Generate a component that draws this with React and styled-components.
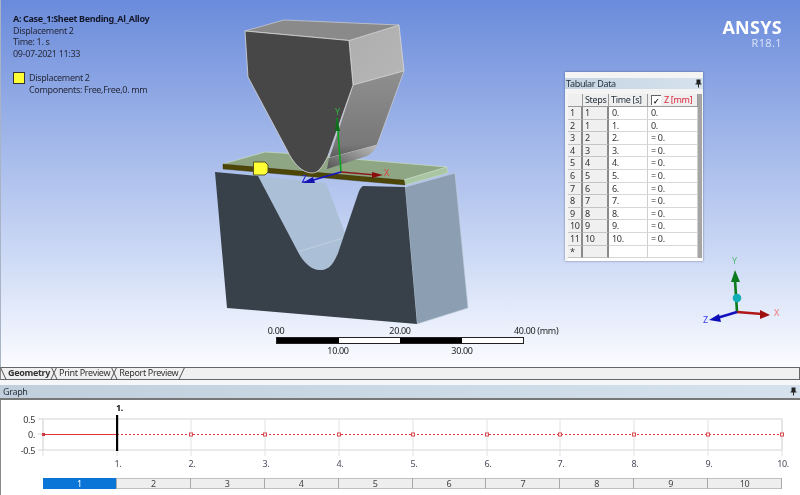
import React from "react";
import styled, { createGlobalStyle } from "styled-components";

const Global = createGlobalStyle`
  html, body { margin: 0; padding: 0; background: #fff; }
  body { width: 800px; height: 495px; overflow: hidden; font-family: "Noto Sans", "Open Sans", sans-serif; }
  #root { width: 800px; height: 495px; }
`;

const Page = styled.div`
  width: 800px; height: 495px; display: flex; flex-direction: column;
  color: #2b2f38; font-size: 9px; letter-spacing: -.33px; filter: blur(0.35px); overflow: hidden;
`;
const Viewport = styled.div`
  position: relative; height: 367px; flex: none; border-left: 1px solid #a9b3c6;
  background: linear-gradient(180deg, #6a8bdb 0%, #a4b9ea 40%, #d0dcf6 72%, #fbfcff 100%);
`;
const Annotation = styled.div`
  position: relative; width: 200px; padding: 13px 0 0 12px; display: flex; flex-direction: column; line-height: 11.7px; color: #262a3c;
`;
const Title = styled.div` font-weight: 700; color: #14182a; `;
const Legend = styled.div` display: flex; gap: 4px; margin-top: 12px; `;
const Swatch = styled.div` width: 12px; height: 12px; background: #ffff33; border: 1px solid #333; box-sizing: border-box; `;
const Logo = styled.div`
  position: absolute; top: 18px; right: 18px; display: flex; flex-direction: column; align-items: flex-end; gap: 1px; color: #fff;
`;
const LogoName = styled.div` font: 700 18px/18px "Open Sans", sans-serif; letter-spacing: .3px; `;
const LogoVer = styled.div` font: 400 11px/11px "Open Sans", sans-serif; color: #dde6f8; letter-spacing: .4px; `;
const Scene = styled.svg` position: absolute; left: -1px; top: 0; `;

const ScaleBar = styled.div`
  position: absolute; left: 275px; top: 325px; width: 248px; color: #222;
`;
const ScaleLabels = styled.div`
  display: flex; justify-content: space-between; height: 11px; line-height: 11px; padding: 0 ${p => p.$inset || 0}px; margin-top: ${p => p.$top || 0}px;
`;
const ScaleTick = styled.span`
  width: 0; display: flex; justify-content: center; white-space: nowrap;
`;
const ScaleTickEnd = styled.span`
  width: 0; white-space: nowrap; transform: translateX(-10px);
`;
const Bar = styled.div` display: flex; height: 7px; border: 1px solid #222; box-sizing: border-box; margin-top: 1px; `;
const BarPart = styled.div` flex: 1; background: ${p => (p.$dark ? "#000" : "#fff")}; `;

const Panel = styled.div`
  position: absolute; left: 564px; top: 72px; width: 138px; height: 189px; background: #f4f4f4;
  box-shadow: 0 0 2px rgba(50, 60, 90, .6); display: flex; flex-direction: column;
`;
const PanelHead = styled.div`
  margin-top: 6px; height: 11px; line-height: 11px; flex: none; display: flex; justify-content: space-between; align-items: center;
  background: linear-gradient(90deg, #c5d3e0, #d6e3ef); color: #23303c; padding: 0 1px;
`;
const PinBox = styled.svg` flex: none; `;
const Table = styled.div`
  margin: 5px 1px 0 3px; flex: 1; display: grid; grid-template-columns: 15px 26px 39px 50px 4px;
  grid-template-rows: 13px repeat(12, 12.6px); background: #fff;
`;
const Head = styled.div`
  background: #efefef; border-right: 1px solid #999; border-bottom: 1px solid #999; box-sizing: border-box;
  padding-left: 2px; line-height: 12px; color: #26303a; display: flex; align-items: center;
`;
const ZHead = styled(Head)` color: #d8283a; gap: 3px; padding-left: 3px; `;
const Check = styled.span`
  width: 10px; height: 10px; background: #fff; border-left: 1px solid #666; border-top: 1px solid #666; box-sizing: border-box; font-size: 8px; line-height: 9px; color: #111; text-align: center; font-weight: 700;
`;
const RowHead = styled.div`
  background: #f0f0f0; border-right: 2px solid #8a8a8a; border-bottom: 1px solid #c4c4c4; box-sizing: border-box; padding-left: 2px; line-height: 11px; color: #333;
`;
const Cell = styled.div`
  background: #fff; border-right: 1px solid #cfcfcf; border-bottom: 1px solid #d8d8d8; box-sizing: border-box; padding-left: 3px; line-height: 11px; color: #333;
`;
const Gutter = styled.div` grid-column: 5; grid-row: 1 / span 13; background: #a5a5a5; `;

const TabBar = styled.div`
  flex: none; height: 13px; box-sizing: border-box; border: 1px solid #666; border-left: 1px solid #888; background: #f0f0f0; display: flex; gap: 9px; padding-left: 7px;
`;
const Tab = styled.div`
  height: 11px; line-height: 10px; position: relative; color: #333; font-weight: ${p => (p.$active ? 700 : 400)};
  &::before {
    content: ""; position: absolute; left: -5px; top: 0; width: 1px; height: 12px; background: #555; transform: skewX(25deg);
  }
  &::after {
    content: ""; position: absolute; right: -4px; top: 0; width: 1px; height: 12px; background: #555; transform: skewX(-25deg);
  }
`;
const Gap = styled.div` flex: none; height: 5px; background: #f5f6f8; `;
const GraphHead = styled.div`
  flex: none; height: 15px; box-sizing: border-box; border-bottom: 2px solid #777; background: linear-gradient(90deg, #c1cfdc, #d5e2ee);
  display: flex; justify-content: space-between; align-items: center; padding: 0 3px; color: #28333f; line-height: 13px;
`;
const GraphBody = styled.div`
  flex: 1; background: #fff; position: relative; border-left: 1px solid #8a8a8a;
`;
const Chart = styled.svg` position: absolute; left: -1px; top: 0; `;
const Slider = styled.div`
  position: absolute; left: 42px; top: 78px; width: 739px; height: 11px; display: grid; grid-template-columns: repeat(10, 1fr);
  box-sizing: border-box; background: #eee; box-shadow: inset 0 0 0 1px #c0c0c0;
`;
const Step = styled.div`
  text-align: center; line-height: 11px; color: ${p => (p.$on ? "#fff" : "#444")}; background: ${p => (p.$on ? "#0a75d6" : "transparent")};
  border-right: 1px solid #a8a8a8; box-sizing: border-box;
`;

const Pin = () => (
  <PinBox width="7" height="9" viewBox="0 0 7 9">
    <path d="M1.5 0.5h4v4h1v1h-6v-1h1zM3 5.5h1v3h-1z" fill="#222" />
  </PinBox>
);

const rows = [
  ["1", "1", "0.", "0."], ["2", "1", "1.", "0."], ["3", "2", "2.", "= 0."], ["4", "3", "3.", "= 0."],
  ["5", "4", "4.", "= 0."], ["6", "5", "5.", "= 0."], ["7", "6", "6.", "= 0."], ["8", "7", "7.", "= 0."],
  ["9", "8", "8.", "= 0."], ["10", "9", "9.", "= 0."], ["11", "10", "10.", "= 0."], ["*", "", "", ""],
];
const xs = [43, 117, 191, 265, 339, 413, 487, 560, 634, 708, 782];
const tickLabels = ["1.", "2.", "3.", "4.", "5.", "6.", "7.", "8.", "9.", "10."];

const Model = () => (
  <Scene width="800" height="367" viewBox="0 0 800 367">
    <defs>
      <linearGradient id="lowerFace" x1="0" y1="0" x2="0" y2="1">
        <stop offset="0" stopColor="#8f8f8f" /><stop offset=".85" stopColor="#787878" /><stop offset="1" stopColor="#5a5a5a" />
      </linearGradient>
      <linearGradient id="upperFace" x1="0" y1="0" x2="1" y2="1">
        <stop offset="0" stopColor="#aeaeae" /><stop offset="1" stopColor="#b6b6b6" />
      </linearGradient>
      <linearGradient id="band" x1="0" y1="1" x2="1" y2="0">
        <stop offset="0" stopColor="#555" /><stop offset="1" stopColor="#bdbdbd" />
      </linearGradient>
    </defs>

    {/* lower die */}
    <path d="M405 187 L455 173 L468 308 L417 324 Z" fill="#8b9eb2" stroke="#c4d0dd" strokeWidth=".6" />
    <path d="M258 176 L326 183 L345 233 L338 253 C332 268 326 270 320 270 C311 270 303 262 297 250 Z" fill="#abc0d6" />
    <path d="M297 252 L343 238" stroke="#c6d6e4" strokeWidth=".7" />
    <path d="M215 172 L258 176 L297 250 C303 262 311 270 320 270 C326 270 332 268 338 253 L357 197 C359 191 360 188 363 186 L405 187 L417 324 L227 308 Z" fill="#38414a" />

    {/* sheet */}
    <path d="M223 164 L265 152 L282 153 L447 167 L404 180 Z" fill="#8ea684" stroke="#c8dcc0" strokeWidth=".7" />
    <path d="M404 180 L447 167 L447.5 173 L405 185 Z" fill="#a9c6a2" stroke="#c8dcc0" strokeWidth=".5" />
    <path d="M223 164 L404 180 L405 185 L223 169 Z" fill="#4e4607" stroke="#33300a" strokeWidth=".4" />

    {/* punch */}
    <path d="M349 40.5 L399 25 L404 71 L353 85 Z" fill="url(#upperFace)" stroke="#d8d8d8" strokeWidth=".8" />
    <path d="M353 85 L404 71 L377 145 L329 158 Z" fill="url(#lowerFace)" stroke="#d8d8d8" strokeWidth=".6" />
    <path d="M329 158 L377 145 C375 150 372 153 367 156 L327 169 Z" fill="url(#band)" />
    <path d="M245 31 L284 20 L399 25 L349 40.5 Z" fill="#8a8a8a" stroke="#d0d0d0" strokeWidth=".7" />
    <path d="M245 31 L349 40.5 L353 85 L328 156 C322 168 318 173 312 173 C302 173 293 163 287 150 L248 77 Z" fill="#474747" stroke="#d8d8d8" strokeWidth=".8" />

    {/* central triad */}
    <path d="M341 172 L337 118" stroke="#0aa51e" strokeWidth="1.6" />
    <path d="M337 117 L340 131 L335 131 Z" fill="#0c6e1a" />
    <path d="M341 172 L376 175" stroke="#8c1a1a" strokeWidth="1.6" />
    <path d="M383 175 L372 172 L372 178 Z" fill="#8c0c0c" />
    <path d="M341 172 L310 181" stroke="#1414c8" strokeWidth="1.6" />
    <path d="M302 183 L313 177 L315 183 Z" fill="#1414b0" />
    <path d="M302 183 L305 177" stroke="#1414c8" strokeWidth=".8" />
    <text x="335" y="115" fontSize="9" fill="#33b040" fontFamily="Noto Sans">Y</text>
    <text x="384" y="176" fontSize="9" fill="#dd4444" fontFamily="Noto Sans">X</text>
    <text x="302" y="182" fontSize="8" fill="#2a2ae0" fontFamily="Noto Sans">Z</text>

    {/* marker */}
    <path d="M253.5 162 L265 162 L268 165 L268 172 L265 175 L253.5 175 Z" fill="#ffff33" stroke="#4a4a20" strokeWidth=".9" />

    {/* corner triad */}
    <path d="M737 312 L735 280" stroke="#0e7a1e" strokeWidth="2.6" />
    <path d="M735 270 L740 282 L731 282 Z" fill="#0e7a1e" />
    <path d="M737 312 L762 314" stroke="#b01818" strokeWidth="2.6" />
    <path d="M770 315 L760 310 L760 319 Z" fill="#a01010" />
    <path d="M737 312 L717 318" stroke="#1212c0" strokeWidth="2.6" />
    <path d="M709 320 L719 314 L721 322 Z" fill="#0c0cb8" />
    <circle cx="737" cy="298" r="4.3" fill="#12aeb8" />
    <text x="732" y="264" fontSize="9" fill="#55bb77" fontFamily="Noto Sans">Y</text>
    <text x="774" y="316" fontSize="9" fill="#ee7777" fontFamily="Noto Sans">X</text>
    <text x="703" y="323" fontSize="9" fill="#3a3aee" fontFamily="Noto Sans">Z</text>
  </Scene>
);

const GraphChart = () => (
  <Chart width="800" height="95" viewBox="0 400 800 95">
    <rect x="43" y="419" width="739" height="31" fill="none" stroke="#d4d4d4" strokeWidth="1" />
    {xs.map(x => <path key={x} d={`M${x} 419V456`} stroke="#e2e2e2" />)}
    <path d="M38 419h5M38 434h5M38 450h5" stroke="#d4d4d4" />
    <path d="M43 434.5H117" stroke="#e6323a" strokeWidth="1.2" />
    <path d="M117 434.5H782" stroke="#e6323a" strokeWidth="1.2" strokeDasharray="2 2" />
    <rect x="42" y="433" width="3" height="3" fill="#cf3a42" />
    {xs.slice(2).map(x => <rect key={x} x={x - 1.5} y="433" width="3" height="3" fill="#fff" stroke="#d8484f" />)}
    <rect x="116" y="415" width="2.2" height="36" fill="#000" />
    <g fontFamily="Noto Sans" fontSize="9" fill="#333">
      <text x="116" y="411" fontWeight="700" fill="#111">1.</text>
      <text x="35" y="423" textAnchor="end">0.5</text>
      <text x="35" y="438" textAnchor="end">0.</text>
      <text x="35" y="454" textAnchor="end">-0.5</text>
      {xs.slice(1).map((x, i) => <text key={x} x={x + 1} y="467" textAnchor="middle" fill="#4a4a5a">{tickLabels[i]}</text>)}
    </g>
  </Chart>
);

export default function App() {
  return (
    <>
      <Global />
      <Page>
        <Viewport>
          <Model />
          <Annotation>
            <Title>A: Case_1:Sheet Bending_Al_Alloy</Title>
            <div>Displacement 2</div>
            <div>Time: 1. s</div>
            <div>09-07-2021 11:33</div>
            <Legend>
              <Swatch />
              <div>
                <div>Displacement 2</div>
                <div>Components: Free,Free,0. mm</div>
              </div>
            </Legend>
          </Annotation>
          <Logo>
            <LogoName>ANSYS</LogoName>
            <LogoVer>R18.1</LogoVer>
          </Logo>
          <ScaleBar>
            <ScaleLabels>
              <ScaleTick>0.00</ScaleTick>
              <ScaleTick>20.00</ScaleTick>
              <ScaleTickEnd>40.00 (mm)</ScaleTickEnd>
            </ScaleLabels>
            <Bar>
              <BarPart $dark /><BarPart /><BarPart $dark /><BarPart />
            </Bar>
            <ScaleLabels $inset={62} $top={1}>
              <ScaleTick>10.00</ScaleTick>
              <ScaleTick>30.00</ScaleTick>
            </ScaleLabels>
          </ScaleBar>
          <Panel>
            <PanelHead>Tabular Data<Pin /></PanelHead>
            <Table>
              <Head />
              <Head>Steps</Head>
              <Head>Time [s]</Head>
              <ZHead><Check>✓</Check>Z [mm]</ZHead>
              <Gutter />
              {rows.map(r => (
                <React.Fragment key={r[0]}>
                  <RowHead>{r[0]}</RowHead>
                  <RowHead>{r[1]}</RowHead>
                  <Cell>{r[2]}</Cell>
                  <Cell>{r[3]}</Cell>
                </React.Fragment>
              ))}
            </Table>
          </Panel>
        </Viewport>
        <TabBar>
          <Tab $active>Geometry</Tab>
          <Tab>Print Preview</Tab>
          <Tab>Report Preview</Tab>
        </TabBar>
        <Gap />
        <GraphHead>Graph<Pin /></GraphHead>
        <GraphBody>
          <GraphChart />
          <Slider>
            {Array.from({ length: 10 }, (_, i) => <Step key={i} $on={i === 0}>{i + 1}</Step>)}
          </Slider>
        </GraphBody>
      </Page>
    </>
  );
}
